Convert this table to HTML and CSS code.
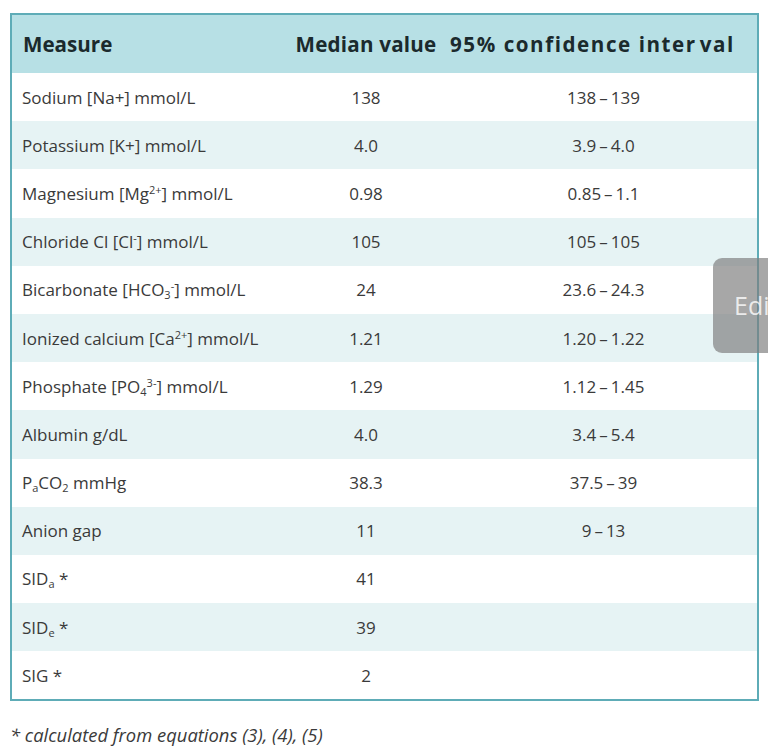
FILE: index.html
```html
<!DOCTYPE html>
<html>
<head>
<meta charset="utf-8">
<link rel="stylesheet" href="styles.css">
</head>
<body>
<div class="page">
  <table class="data">
    <colgroup><col class="c1"><col class="c2"><col class="c3"></colgroup>
    <thead>
      <tr><th class="measure">Measure</th><th class="median">Median value</th><th class="ci">95% confidence inter<span class="gap">v</span>al</th></tr>
    </thead>
    <tbody>
      <tr><td>Sodium [Na+] mmol/L</td><td>138</td><td>138<span class="dash">–</span>139</td></tr>
      <tr><td>Potassium [K+] mmol/L</td><td>4.0</td><td>3.9<span class="dash">–</span>4.0</td></tr>
      <tr><td>Magnesium [Mg<sup>2+</sup>] mmol/L</td><td>0.98</td><td>0.85<span class="dash">–</span>1.1</td></tr>
      <tr><td>Chloride Cl [Cl<sup>-</sup>] mmol/L</td><td>105</td><td>105<span class="dash">–</span>105</td></tr>
      <tr><td>Bicarbonate [HCO<sub>3</sub><sup>-</sup>] mmol/L</td><td>24</td><td>23.6<span class="dash">–</span>24.3</td></tr>
      <tr><td>Ionized calcium [Ca<sup>2+</sup>] mmol/L</td><td>1.21</td><td>1.20<span class="dash">–</span>1.22</td></tr>
      <tr><td>Phosphate [PO<sub>4</sub><sup>3-</sup>] mmol/L</td><td>1.29</td><td>1.12<span class="dash">–</span>1.45</td></tr>
      <tr><td>Albumin g/dL</td><td>4.0</td><td>3.4<span class="dash">–</span>5.4</td></tr>
      <tr><td>P<sub>a</sub>CO<sub>2</sub> mmHg</td><td>38.3</td><td>37.5<span class="dash">–</span>39</td></tr>
      <tr><td>Anion gap</td><td>11</td><td>9<span class="dash">–</span>13</td></tr>
      <tr><td>SID<sub>a</sub> *</td><td>41</td><td></td></tr>
      <tr><td>SID<sub>e</sub> *</td><td>39</td><td></td></tr>
      <tr><td>SIG *</td><td>2</td><td></td></tr>
    </tbody>
  </table>
  <p class="note">* calculated from equations (3), (4), (5)</p>
  <div class="edit-tab">Edi</div>
</div>
</body>
</html>
```
FILE: styles.css
```css
html, body {
  margin: 0;
  padding: 0;
  background: #ffffff;
}
body {
  font-family: "Open Sans", "Noto Sans", "DejaVu Sans", sans-serif;
  color: #3a3a3a;
}
.page {
  position: relative;
  width: 768px;
  height: 755px;
  overflow: hidden;
  padding: 13px 0 0 10px;
  box-sizing: border-box;
}
.data {
  width: 749px;
  border-collapse: separate;
  border-spacing: 0;
  border: 2px solid #5eacb7;
  table-layout: fixed;
}
.c1 { width: 270px; }
.c2 { width: 168px; }
.c3 { width: 307px; }
.data thead tr {
  background: #b7e0e5;
  height: 58px;
}
.data th {
  font-size: 20.6px;
  font-weight: 700;
  color: #1b2a2d;
  padding: 0;
  vertical-align: middle;
  text-align: center;
}
.data th.measure {
  text-align: left;
  padding-left: 11px;
}
.data th.median {
  letter-spacing: 0.2px;
}
.data th.ci {
  text-align: left;
  padding-left: 0;
  letter-spacing: 1.55px;
}
.gap { margin-left: 3px; }
.data tbody tr {
  height: 48.2px;
}
.data tbody tr:nth-child(odd) { background: #ffffff; }
.data tbody tr:nth-child(even) { background: #e6f3f4; }
.data td {
  font-size: 17px;
  padding: 0;
  text-align: center;
  vertical-align: middle;
  color: #3a3a3a;
}
.data td:first-child {
  text-align: left;
  padding-left: 10px;
}
.dash {
  margin: 0 3px;
}
sup, sub {
  font-size: 11px;
  line-height: 0;
}
sup { vertical-align: 6px; }
sub { vertical-align: -3px; }
.note {
  margin: 21px 0 0 0;
  font-size: 18.4px;
  font-style: italic;
  color: #3a3a3a;
}
.edit-tab {
  position: absolute;
  left: 713px;
  top: 258px;
  width: 90px;
  height: 95px;
  border-radius: 9px;
  background: rgba(125, 125, 125, 0.68);
  color: rgba(255, 255, 255, 0.78);
  font-size: 25px;
  line-height: 95px;
  padding-left: 21px;
  box-sizing: border-box;
}
```
